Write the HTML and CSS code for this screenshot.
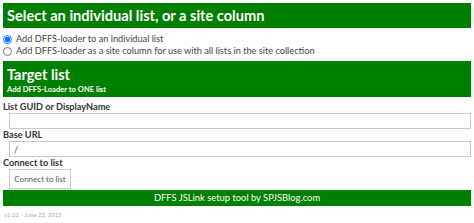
FILE: index.html
```html
<!DOCTYPE html>
<html lang="en">
<head>
<meta charset="utf-8">
<title>DFFS JSLink setup</title>
<link rel="stylesheet" href="styles.css">
</head>
<body>
<div class="setup">
	<div class="bar">Select an individual list, or a site column</div>
	<div class="choices">
		<label class="choice"><input type="radio" name="mode" checked> Add DFFS-loader to an individual list</label>
		<label class="choice"><input type="radio" name="mode"> Add DFFS-loader as a site column for use with all lists in the site collection</label>
	</div>
	<div class="bar target">
		<div class="target-title">Target list</div>
		<div class="target-sub">Add DFFS-Loader to ONE list</div>
	</div>
	<div class="field-label first">List GUID or DisplayName</div>
	<input type="text" class="field">
	<div class="field-label">Base URL</div>
	<input type="text" class="field" value="/">
	<div class="field-label">Connect to list</div>
	<button class="btn">Connect to list</button>
	<div class="footer">DFFS JSLink setup tool by SPJSBlog.com</div>
	<div class="version">v1.02 - June 23, 2015</div>
</div>
</body>
</html>
```

FILE: styles.css
```css
body {margin: 0; font-family: "Segoe UI", Lato, sans-serif; color: #444; background: #fff;}
.setup {margin: 3px;}
.bar {
	background: #008000;
	color: #fff;
	font-weight: bold;
	font-size: 14.6px;
	height: 25px;
	line-height: 25px;
	padding-left: 4px;
}
.choices {padding: 5px 0 4px 0;}
.choice {display: flex; align-items: center; font-size: 9.2px; height: 12px; line-height: 12px; color: #444;}
.choice input {width: 9px; height: 9px; margin: 0 4px 0 0; flex: none;}
.bar.target {height: 36px; line-height: normal;}
.target-title {font-size: 14.5px; line-height: 18px; padding-top: 5px;}
.target-sub {font-size: 7.6px; line-height: 10px;}
.field-label {font-size: 9.2px; font-weight: bold; color: #333; line-height: 12px;}
.field-label.first {margin-top: 4px;}
.field {
	display: block;
	box-sizing: border-box;
	width: calc(100% - 6px);
	margin: 0 0 0 6px;
	height: 16px;
	border: 1px solid #c8c8c8;
	font-family: inherit;
	font-size: 9px;
	color: #444;
	padding: 0 4px;
}
.btn {
	display: block;
	box-sizing: border-box;
	margin: 0 0 0 6px;
	height: 20px;
	width: 62px;
	background: #fff;
	border: 1px solid #c8c8c8;
	font-family: inherit;
	font-size: 8px;
	color: #555;
	padding: 0;
	white-space: nowrap;
}
.footer {
	margin-top: 1px;
	background: #008000;
	color: #fff;
	font-size: 9.4px;
	text-align: center;
	height: 16px;
	line-height: 16px;
}
.version {font-size: 6px; color: #aaa; margin-top: 5px; padding-left: 1px;}
```
